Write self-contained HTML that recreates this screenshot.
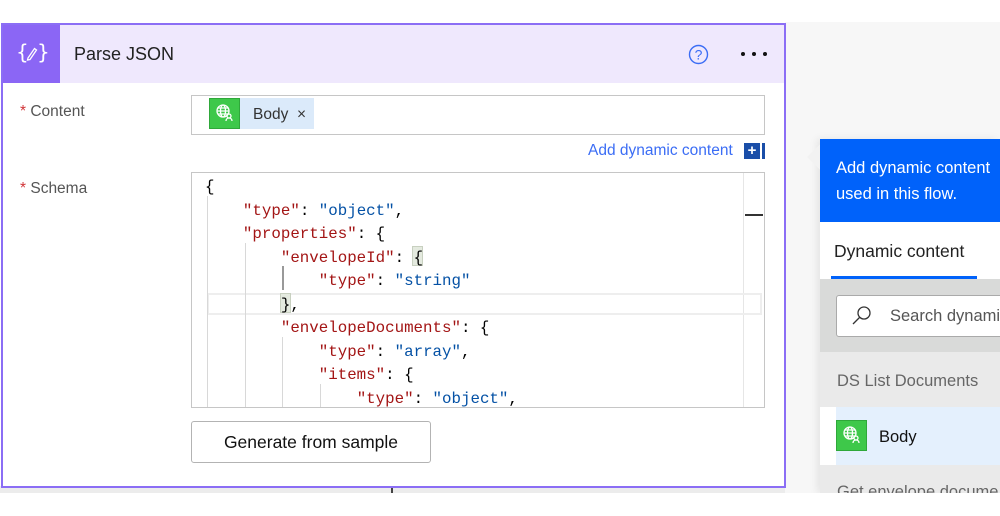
<!DOCTYPE html>
<html><head><meta charset="utf-8"><style>
*{box-sizing:border-box;margin:0;padding:0}
body{width:1000px;height:516px;overflow:hidden;background:#fff;font-family:"Liberation Sans",sans-serif;position:relative}
.abs{position:absolute}
.code{font-family:"Liberation Mono",monospace;font-size:15.8px;white-space:pre;color:#000}
.k{color:#a31515}.s{color:#0451a5}
.guide{position:absolute;width:1px;background:#d8d8d8}
</style></head><body>
<div class="abs" style="left:785px;top:22px;width:215px;height:471px;background:#f7f7f7"></div>
<div class="abs" style="left:0;top:486px;width:785px;height:7px;background:#ececec"></div>
<div class="abs" style="left:391px;top:486px;width:2px;height:8px;background:#444"></div>
<div class="abs" style="left:1px;top:23px;width:785px;height:465px;border:2px solid #8b6ef5;background:#fff"></div>
<div class="abs" style="left:3px;top:25px;width:781px;height:58px;background:#efe8fd"></div>
<div class="abs" style="left:3px;top:25px;width:57px;height:58px;background:#8b66f5"></div>
<div class="abs" style="left:16px;top:40px;font-size:20px;color:#fff;font-family:'DejaVu Sans',sans-serif;letter-spacing:0">{</div>
<div class="abs" style="left:37px;top:40px;font-size:20px;color:#fff;font-family:'DejaVu Sans',sans-serif">}</div>
<svg class="abs" style="left:25px;top:45px" width="14" height="16" viewBox="0 0 14 16"><path d="M3 13 L9.5 3.5 L11.5 5 L5 14.5 L2.5 15 Z" fill="none" stroke="#fff" stroke-width="1.3"/></svg>
<div class="abs" style="left:74px;top:44px;font-size:18px;color:#222">Parse JSON</div>
<svg class="abs" style="left:688px;top:44px" width="21" height="21"><circle cx="10.5" cy="10.5" r="9" fill="none" stroke="#3b6df5" stroke-width="1.4"/><text x="10.5" y="15.5" text-anchor="middle" font-size="14" fill="#3b6df5" font-family="Liberation Sans">?</text></svg>
<div class="abs" style="left:741px;top:52px;width:4px;height:4px;border-radius:2px;background:#111;box-shadow:11px 0 #111,22px 0 #111"></div>
<div class="abs" style="left:20px;top:103px;font-size:15.5px;color:#555"><span style="color:#d13438">*</span> Content</div>
<div class="abs" style="left:191px;top:95px;width:574px;height:40px;border:1px solid #c6c6c6"></div>
<div class="abs" style="left:209px;top:98px;width:105px;height:31px;background:#dbeafa"></div>
<div class="abs" style="left:209px;top:98px;width:31px;height:31px;background:#3ec84a;border:1px solid #2fa83a"></div>
<svg class="abs" style="left:215px;top:103px" width="20" height="20" viewBox="0 0 20 20" fill="none" stroke="#fff" stroke-width="1.3"><circle cx="8" cy="8" r="6"/><ellipse cx="8" cy="8" rx="2.5" ry="6"/><path d="M2 8h12M3 5h10M3 11h10"/><circle cx="14" cy="13" r="2"/><path d="M11 18c0-2 1.5-3 3-3s3 1 3 3"/></svg>
<div class="abs" style="left:253px;top:106px;font-size:15.5px;color:#333">Body&nbsp;&nbsp;×</div>
<div class="abs" style="left:588px;top:142px;font-size:15.5px;color:#3b6df5">Add dynamic content</div>
<div class="abs" style="left:744px;top:143px;width:16px;height:16px;background:#1a4ea8;color:#fff;font-size:15px;line-height:15px;text-align:center;font-weight:bold">+</div>
<div class="abs" style="left:762px;top:143px;width:3px;height:16px;background:#1a4ea8"></div>
<div class="abs" style="left:20px;top:180px;font-size:15.5px;color:#555"><span style="color:#d13438">*</span> Schema</div>
<div class="abs" style="left:191px;top:172px;width:574px;height:236px;border:1px solid #c6c6c6;overflow:hidden;background:#fff">
  <div class="abs" style="left:551px;top:0;width:1px;height:236px;background:#e6e6e6"></div>
  <div class="abs" style="left:553px;top:41px;width:18px;height:2px;background:#333"></div>
  <div class="abs" style="left:15px;top:120px;width:555px;height:22px;border:2px solid #eee"></div>
  <div class="guide" style="left:15px;top:23px;height:212px"></div>
  <div class="guide" style="left:53px;top:70px;height:165px"></div>
  <div class="guide" style="left:90px;top:93px;height:24px;background:#999;width:2px"></div>
  <div class="guide" style="left:90px;top:164px;height:71px"></div>
  <div class="guide" style="left:128px;top:211px;height:24px"></div>
  <div class="abs" style="left:220px;top:73px;width:11px;height:20px;background:#e4eadf;border:1px solid #c8d0c0"></div>
  <div class="abs" style="left:88px;top:120px;width:11px;height:20px;background:#e4eadf;border:1px solid #c8d0c0"></div>
  <div class="abs code" style="left:13px;top:3px;line-height:23.5px">{
    <span class="k">"type"</span>: <span class="s">"object"</span>,
    <span class="k">"properties"</span>: {
        <span class="k">"envelopeId"</span>: {
            <span class="k">"type"</span>: <span class="s">"string"</span>
        },
        <span class="k">"envelopeDocuments"</span>: {
            <span class="k">"type"</span>: <span class="s">"array"</span>,
            <span class="k">"items"</span>: {
                <span class="k">"type"</span>: <span class="s">"object"</span>,</div>
</div>
<div class="abs" style="left:191px;top:421px;width:240px;height:42px;border:1px solid #b3b3b3;border-radius:3px;font-size:17.5px;color:#111;text-align:center;line-height:40px">Generate from sample</div>
<div class="abs" style="left:820px;top:139px;width:180px;height:354px;background:#fff;box-shadow:-3px 0 8px rgba(0,0,0,.08)"></div>
<div class="abs" style="left:811px;top:148px;width:18px;height:18px;background:#f2f2f2;transform:rotate(45deg)"></div>
<div class="abs" style="left:820px;top:139px;width:180px;height:83px;background:#0062fa;color:#fff;font-size:16.5px;line-height:26px;padding:16px 0 0 16px;white-space:nowrap">Add dynamic content<br>used in this flow.</div>
<div class="abs" style="left:834px;top:241px;font-size:17.5px;color:#222">Dynamic content</div>
<div class="abs" style="left:831px;top:276px;width:146px;height:3px;background:#0062fa"></div>
<div class="abs" style="left:820px;top:279px;width:180px;height:73px;background:#d9dad9"></div>
<div class="abs" style="left:836px;top:295px;width:170px;height:42px;background:#fff;border:1px solid #aaa;border-radius:3px"></div>
<svg class="abs" style="left:851px;top:305px" width="22" height="22"><circle cx="13" cy="8" r="6" fill="none" stroke="#333" stroke-width="1.3"/><path d="M9 12 L2 19" stroke="#333" stroke-width="1.3"/></svg>
<div class="abs" style="left:890px;top:307px;font-size:16.5px;color:#555;white-space:nowrap">Search dynami</div>
<div class="abs" style="left:820px;top:352px;width:180px;height:55px;background:#eaeaea"></div>
<div class="abs" style="left:837px;top:372px;font-size:16.5px;color:#666">DS List Documents</div>
<div class="abs" style="left:836px;top:407px;width:164px;height:58px;background:#e4f0fd"></div>
<div class="abs" style="left:836px;top:420px;width:31px;height:31px;background:#3ec84a;border:1px solid #2fa83a"></div>
<svg class="abs" style="left:842px;top:425px" width="20" height="20" viewBox="0 0 20 20" fill="none" stroke="#fff" stroke-width="1.3"><circle cx="8" cy="8" r="6"/><ellipse cx="8" cy="8" rx="2.5" ry="6"/><path d="M2 8h12M3 5h10M3 11h10"/><circle cx="14" cy="13" r="2"/><path d="M11 18c0-2 1.5-3 3-3s3 1 3 3"/></svg>
<div class="abs" style="left:879px;top:428px;font-size:16.5px;color:#111">Body</div>
<div class="abs" style="left:820px;top:465px;width:180px;height:28px;background:#eaeaea;overflow:hidden"><div style="padding:18px 0 0 17px;font-size:16.5px;color:#666;white-space:nowrap">Get envelope docume</div></div>
<div class="abs" style="left:0;top:493px;width:1000px;height:23px;background:#fff"></div>
</body></html>
